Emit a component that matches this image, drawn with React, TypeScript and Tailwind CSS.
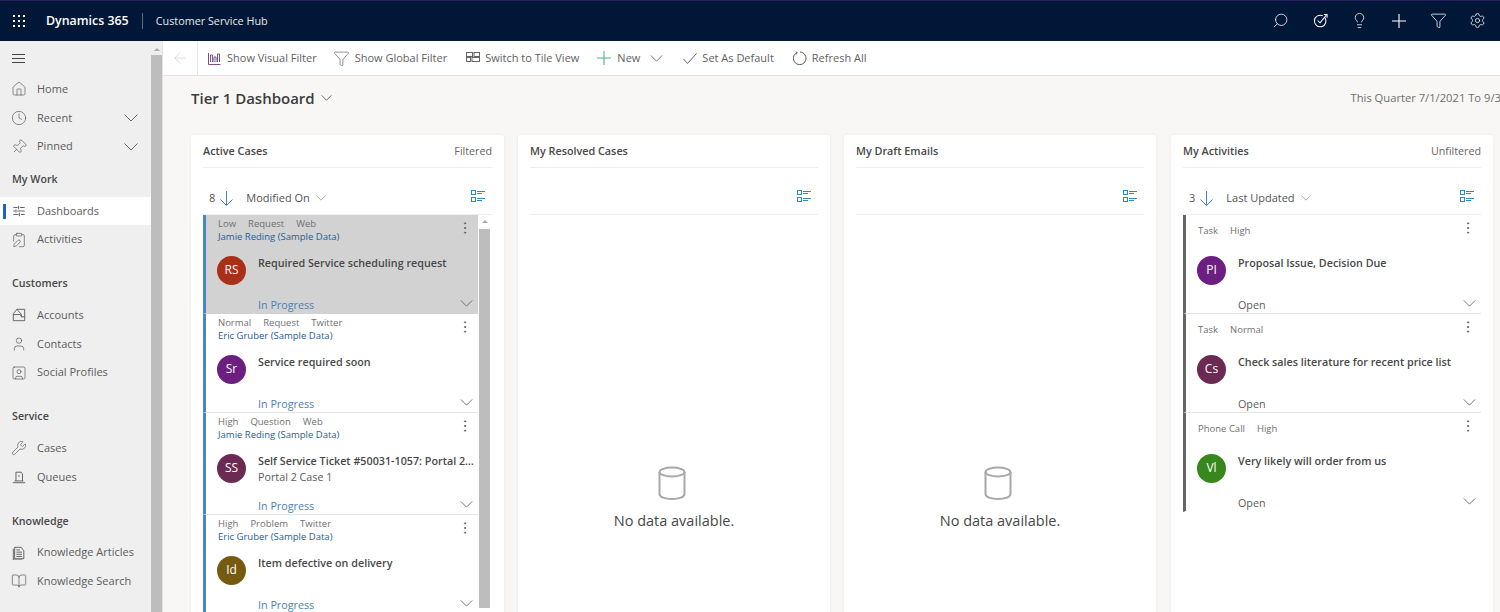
import { ReactNode } from "react";
import { ArrowLeft, BookOpen, Clock, EllipsisVertical, Funnel, Home, Lightbulb, Pin, Search, Settings, SquareUser, User, Wrench, ClipboardPen } from "lucide-react";

function Glyph({ children, className = "" }: { children: ReactNode; className?: string }) {
  return (
    <svg viewBox="0 0 16 16" fill="none" stroke="currentColor" strokeWidth="1" className={className}>
      {children}
    </svg>
  );
}

// thin chevron, the width is the full drawn width
function Chev({ className = "" }: { className?: string }) {
  return (
    <svg viewBox="0 0 14 8" fill="none" stroke="currentColor" strokeWidth="1" className={className}>
      <path d="M.5.5 7 7 13.500.5" />
    </svg>
  );
}

function PlusMark({ className = "" }: { className?: string }) {
  return (
    <svg viewBox="0 0 14 14" fill="none" stroke="currentColor" strokeWidth="1.100" className={className}>
      <path d="M7 0v14M0 7h14" />
    </svg>
  );
}

function Waffle() {
  const dots = [2, 7, 12];
  return (
    <svg viewBox="0 0 14 14" className="w-[14px] h-[14px]" fill="#fff">
      {dots.map((y) => dots.map((x) => <rect key={`${x}-${y}`} x={x - 1} y={y - 1} width="2" height="2" />))}
    </svg>
  );
}

function ListIcon({ className = "" }: { className?: string }) {
  return (
    <svg viewBox="0 0 14 12" fill="none" stroke="#2b88c8" strokeWidth="1" className={`w-[14px] h-[12px] ${className}`}>
      <rect x="0.5" y="0.5" width="4" height="4" />
      <rect x="0.5" y="7.5" width="4" height="4" />
      <path d="M6 1.500h8M6 3.500h5M6 8.500h8M6 10.500h5" />
    </svg>
  );
}

const iconCls = "w-[16px] h-[16px] text-[#555]";
const glyphCls = "w-[14px] h-[14px] ml-px text-[#555]";

function NavItem({ icon, label, chevron, active }: { icon: ReactNode; label: string; chevron?: boolean; active?: boolean }) {
  return (
    <div className={`relative flex items-center h-[28.7px] pl-[11px] pr-[13px] ${active ? "bg-white" : ""}`}>
      {active && <div className="absolute left-[3px] top-[7px] w-[3px] h-[15px] bg-[#1c62d0]" />}
      <div className="w-[26px] shrink-0">{icon}</div>
      <span className="text-[11px] text-[#5c5c5c] whitespace-nowrap">{label}</span>
      {chevron && <Chev className="ml-auto w-[14px] h-[8px] text-[#666]" />}
    </div>
  );
}

function NavGroup({ title, first, children }: { title: string; first?: boolean; children: ReactNode }) {
  return (
    <div className={first ? "" : "mt-[11.5px]"}>
      <div className="flex items-center h-[35.5px] pl-[12px] text-[10.7px] font-semibold text-[#484848]">{title}</div>
      {children}
    </div>
  );
}

function Sidebar() {
  return (
    <aside className="flex w-[163px] shrink-0 bg-[#efefef] border-r border-[#e4e4e4]">
      <div className="w-[151px] shrink-0">
        <div className="flex items-center h-[34px] pl-[12px]">
          <svg viewBox="0 0 13 9" fill="none" stroke="#444" strokeWidth="1" className="w-[13px] h-[9px]">
            <path d="M0 .5h13M0 4.500h13M0 8.500h13" />
          </svg>
        </div>
        <NavItem icon={<Home className={iconCls} strokeWidth={1} />} label="Home" />
        <NavItem icon={<Clock className={iconCls} strokeWidth={1} />} label="Recent" chevron />
        <NavItem icon={<Pin className={`${iconCls} rotate-45`} strokeWidth={1} />} label="Pinned" chevron />
        <NavGroup title="My Work" first>
          <NavItem
            active
            label="Dashboards"
            icon={
              <Glyph className={glyphCls}>
                <path d="M1.500 4h5M9 4h5.500M1.500 8h2M6 8h8.500M1.500 12h6M10 12h4.500M7.500 2v4M4.500 6v4M8.500 10v4" />
              </Glyph>
            }
          />
          <NavItem icon={<ClipboardPen className={iconCls} strokeWidth={1} />} label="Activities" />
        </NavGroup>
        <NavGroup title="Customers">
          <NavItem
            label="Accounts"
            icon={
              <Glyph className={glyphCls}>
                <path d="M1.500 14.500v-8l4-5h9v13zM1.500 7.500h8l2 3M5.500 1.500l5 5.500v3h4" />
              </Glyph>
            }
          />
          <NavItem icon={<User className={iconCls} strokeWidth={1} />} label="Contacts" />
          <NavItem icon={<SquareUser className={iconCls} strokeWidth={1} />} label="Social Profiles" />
        </NavGroup>
        <NavGroup title="Service">
          <NavItem icon={<Wrench className={iconCls} strokeWidth={1} />} label="Cases" />
          <NavItem
            label="Queues"
            icon={
              <Glyph className={glyphCls}>
                <path d="M1 14.500h14M3 12.500h10M4.500 12.500v-10h6l1.500 2v8M8 6v2" />
              </Glyph>
            }
          />
        </NavGroup>
        <NavGroup title="Knowledge">
          <NavItem
            label="Knowledge Articles"
            icon={
              <Glyph className={glyphCls}>
                <path d="M3 14.500h10.500v-9l-3-4H3zM1.500 3v13h10M5 4.500h4M5 7h6.500M5 9.500h6.500M5 12h6.500" />
              </Glyph>
            }
          />
          <NavItem icon={<BookOpen className={iconCls} strokeWidth={1} />} label="Knowledge Search" />
        </NavGroup>
      </div>
      <div className="flex flex-col w-[11px] shrink-0 pt-[5px]">
        <div className="flex justify-center h-[9px] pt-[2px]">
          <div className="w-0 h-0 border-x-[3px] border-x-transparent border-b-[3px] border-b-[#aaa]" />
        </div>
        <div className="flex-1 bg-[#bdbdbd]" />
      </div>
    </aside>
  );
}

function ToolItem({ icon, label, className = "" }: { icon: ReactNode; label: string; className?: string }) {
  return (
    <div className={`flex items-center gap-[5px] whitespace-nowrap ${className}`}>
      {icon}
      <span className="text-[11px] text-[#5f5f5f]">{label}</span>
    </div>
  );
}

function Toolbar() {
  return (
    <div className="flex items-center h-[35px] bg-white border-b border-[#e3e3e3]">
      <div className="flex items-center justify-center w-[35px] h-[34px] border-r border-[#e8e8e8]">
        <ArrowLeft className="w-[18px] h-[18px] text-[#d0d0d0]" strokeWidth={1} />
      </div>
      <ToolItem
        className="ml-[10px]"
        label="Show Visual Filter"
        icon={
          <svg viewBox="0 0 13 13" fill="none" stroke="#7a4f8c" strokeWidth="1" className="w-[13px] h-[13px] mr-px">
            <path d="M.5 1v11.500h12M2.500 10V3h2v7M6 10V5h2v5M9.500 10V2h2v8" />
          </svg>
        }
      />
      <ToolItem
        className="ml-[16px]"
        label="Show Global Filter"
        icon={<Funnel className="w-[17px] h-[17px] text-[#666]" strokeWidth={1} />}
      />
      <ToolItem
        className="ml-[19px]"
        label="Switch to Tile View"
        icon={
          <svg viewBox="0 0 14 10" fill="none" stroke="#666" strokeWidth="1" className="w-[14px] h-[10px] -mt-[2px]">
            <rect x=".5" y=".5" width="6" height="4" />
            <rect x="8" y=".5" width="5.500" height="4" />
            <rect x=".5" y="5.500" width="4" height="4" />
            <rect x="6" y="5.500" width="7.500" height="4" />
          </svg>
        }
      />
      <ToolItem className="ml-[18px]" label="New" icon={<PlusMark className="w-[14px] h-[14px] mr-px text-[#55b08a]" />} />
      <Chev className="ml-[10px] w-[13px] h-[7px] text-[#666]" />
      <ToolItem
        className="ml-[20px]"
        label="Set As Default"
        icon={
          <svg viewBox="0 0 14 11" fill="none" stroke="#666" strokeWidth="1" className="w-[14px] h-[11px]">
            <path d="M.5 6l4 4.500L13.500.5" />
          </svg>
        }
      />
      <ToolItem
        className="ml-[19px]"
        label="Refresh All"
        icon={
          <svg viewBox="0 0 14 14" fill="none" stroke="#555" strokeWidth="1" className="w-[14px] h-[14px] -mt-[1px]">
            <path d="M4 1.600A6.300 6.300 0 1 0 7 1M3 .5l1.200 1.300L3 3.500" />
          </svg>
        }
      />
    </div>
  );
}

type RowData = {
  meta: string[];
  owner?: string;
  initials: string;
  color: string;
  title: string;
  sub?: string;
  status: string;
  selected?: boolean;
  tall?: boolean;
  last?: boolean;
};

const caseRows: RowData[] = [
  { meta: ["Low", "Request", "Web"], owner: "Jamie Reding (Sample Data)", initials: "RS", color: "bg-[#a92f17]", title: "Required Service scheduling request", status: "In Progress", selected: true },
  { meta: ["Normal", "Request", "Twitter"], owner: "Eric Gruber (Sample Data)", initials: "Sr", color: "bg-[#6c1f80]", title: "Service required soon", status: "In Progress" },
  { meta: ["High", "Question", "Web"], owner: "Jamie Reding (Sample Data)", initials: "SS", color: "bg-[#6b2a52]", title: "Self Service Ticket #50031-1057: Portal 2 Case 1", sub: "Portal 2 Case 1", status: "In Progress", tall: true },
  { meta: ["High", "Problem", "Twitter"], owner: "Eric Gruber (Sample Data)", initials: "Id", color: "bg-[#765a10]", title: "Item defective on delivery", status: "In Progress" },
];

const activityRows: RowData[] = [
  { meta: ["Task", "High"], initials: "PI", color: "bg-[#6c1f80]", title: "Proposal Issue, Decision Due", status: "Open" },
  { meta: ["Task", "Normal"], initials: "Cs", color: "bg-[#6b2a52]", title: "Check sales literature for recent price list", status: "Open" },
  { meta: ["Phone Call", "High"], initials: "Vl", color: "bg-[#37871c]", title: "Very likely will order from us", status: "Open", last: true },
];

function Row({ row, accent, statusColor }: { row: RowData; accent: string; statusColor: string }) {
  const bottom = row.selected ? "bg-[#d2d2d2] border-b-[#d2d2d2]" : row.last ? "border-b-transparent" : "border-b-[#e4e4e4]";
  return (
    <div className={`relative flex flex-col border-l-[3px] border-b pl-[11px] pr-[5px] ${accent} ${row.tall ? "h-[102px]" : "h-[99px]"} ${bottom}`}>
      <div className="flex flex-col justify-center h-[30px] pl-px shrink-0">
        <div className="flex gap-[12px] text-[9.5px] leading-[13px] text-[#707070]">
          {row.meta.map((m) => (
            <span key={m}>{m}</span>
          ))}
        </div>
        {row.owner && <div className="text-[9.5px] leading-[13px] text-[#22609a] whitespace-nowrap">{row.owner}</div>}
      </div>
      <EllipsisVertical className="absolute top-[5px] right-[5px] w-[16px] h-[16px] text-[#555]" strokeWidth={1.25} />
      <div className="flex gap-[12px] mt-[10px]">
        <div className={`flex items-center justify-center w-[29px] h-[29px] mt-[0.5px] shrink-0 rounded-full text-[12px] text-white ${row.color}`}>
          {row.initials}
        </div>
        <div className="min-w-0 flex-1 -mr-[3px]">
          <div className="truncate text-[10.75px] leading-[16px] font-semibold text-[#484848]">{row.title}</div>
          {row.sub && <div className="text-[10.75px] leading-[16px] text-[#5c5c5c]">{row.sub}</div>}
        </div>
      </div>
      <div className="flex items-center justify-between mt-auto pl-[41px]">
        <span className={`text-[10.75px] leading-[16px] ${statusColor}`}>{row.status}</span>
        <Chev className="w-[13px] h-[7px] mb-[3px] text-[#666]" />
      </div>
    </div>
  );
}

function Card({ title, filter, width, children }: { title: string; filter?: string; width: string; children: ReactNode }) {
  return (
    <section className={`shrink-0 bg-white rounded-[3px] shadow-[0_0_3px_rgba(0,0,0,0.07)] px-[12px] ${width}`}>
      <div className="flex items-center justify-between h-[33px] border-b border-[#eeeeee]">
        <span className="text-[10.8px] font-semibold text-[#484848]">{title}</span>
        {filter && <span className="text-[10.7px] text-[#666]">{filter}</span>}
      </div>
      {children}
    </section>
  );
}

function SortBar({ count, label }: { count?: string; label?: string }) {
  return (
    <div className="flex items-center h-[47px] pl-[6px] pr-[7px] pt-[14px] border-b border-[#eeeeee]">
      {count && (
        <>
          <span className="text-[11px] text-[#555]">{count}</span>
          <svg viewBox="0 0 13 15" fill="none" stroke="#4a7fc0" strokeWidth="1" className="ml-[5px] w-[13px] h-[15px]">
            <path d="M6.500 0v14.500M.5 8.500l6 6 6-6" />
          </svg>
          <span className="ml-[13px] text-[11px] text-[#555]">{label}</span>
          <Chev className="ml-[6px] w-[10px] h-[6px] text-[#888]" />
        </>
      )}
      <ListIcon className="ml-auto -mt-[4px]" />
    </div>
  );
}

function Empty() {
  return (
    <div className="flex flex-col items-center pt-[251px]">
      <svg viewBox="0 0 28 35" fill="none" stroke="#a8a8a8" strokeWidth="2" className="w-[28px] h-[35px] -ml-[4px]">
        <ellipse cx="14" cy="6" rx="12.500" ry="4.500" />
        <path d="M1.500 6v22c0 3 5.500 5 12.500 5s12.500-2 12.500-5V6" />
      </svg>
      <div className="mt-[9px] text-[14.5px] text-[#484848]">No data available.</div>
    </div>
  );
}

export default function App() {
  return (
    <div className="flex flex-col w-[1500px] h-[612px] overflow-hidden bg-[#f8f7f6] font-['Open_Sans',sans-serif]">
      <header className="flex items-center h-[41px] shrink-0 bg-[#001738] border-t border-[#2c1f5e] text-white">
        <div className="ml-[12px]">
          <Waffle />
        </div>
        <span className="ml-[20px] text-[12.4px] font-semibold">Dynamics 365</span>
        <div className="ml-[13px] w-px h-[16px] bg-[#5a6a80]" />
        <span className="ml-[13px] text-[10.8px] text-[#e8e8e8]">Customer Service Hub</span>
        <div className="ml-auto flex items-center pr-[3px] -mt-[1px]">
          <div className="flex justify-center w-[39.3px]">
            <Search className="w-[17px] h-[17px] -scale-x-100" strokeWidth={1.1} />
          </div>
          <div className="flex justify-center w-[39.3px]">
            <svg viewBox="0 0 16 16" fill="none" stroke="#fff" strokeWidth="1.100" className="w-[15px] h-[15px]">
              <path d="M12.800 5A6.200 6.200 0 1 1 10.500 3M5 8l2.500 2.500L14 2.500M11.500 1.500H15V5" />
            </svg>
          </div>
          <div className="flex justify-center w-[39.3px]">
            <Lightbulb className="w-[17px] h-[17px]" strokeWidth={1.1} />
          </div>
          <div className="flex justify-center w-[39.3px]">
            <PlusMark className="w-[14px] h-[14px]" />
          </div>
          <div className="flex justify-center w-[39.3px]">
            <Funnel className="w-[17px] h-[17px]" strokeWidth={1.1} />
          </div>
          <div className="flex justify-center w-[39.3px]">
            <Settings className="w-[17px] h-[17px]" strokeWidth={1.1} />
          </div>
        </div>
      </header>
      <div className="flex flex-1 min-h-0">
        <Sidebar />
        <main className="flex-1 min-w-0 overflow-hidden">
          <Toolbar />
          <div className="flex items-center justify-between w-[1374px] h-[44px] pl-[28px]">
            <div className="flex items-center gap-[6px]">
              <h1 className="text-[15px] font-semibold text-[#3c3c3c]">Tier 1 Dashboard</h1>
              <Chev className="w-[11px] h-[6px] text-[#444]" />
            </div>
            <span className="text-[11.2px] text-[#6e6e6e] whitespace-nowrap">This Quarter 7/1/2021 To 9/30/2021</span>
          </div>
          <div className="flex gap-[14px] h-[600px] mt-[15px] pl-[28px]">
            <Card title="Active Cases" filter="Filtered" width="w-[313px]">
              <SortBar count="8" label="Modified On" />
              <div className="flex">
                <div className="w-[275px] shrink-0">
                  {caseRows.map((r) => (
                    <Row key={r.title} row={r} accent="border-l-[#4a86c0]" statusColor="text-[#4d81b4]" />
                  ))}
                </div>
                <div className="flex flex-col w-[11px] ml-[1px] h-[393px]">
                  <div className="flex justify-center h-[14px] pt-[5px]">
                    <div className="w-0 h-0 border-x-[3px] border-x-transparent border-b-[3px] border-b-[#aaa]" />
                  </div>
                  <div className="flex-1 bg-[#bdbdbd]" />
                </div>
              </div>
            </Card>
            <Card title="My Resolved Cases" width="w-[312px]">
              <SortBar />
              <Empty />
            </Card>
            <Card title="My Draft Emails" width="w-[312px]">
              <SortBar />
              <Empty />
            </Card>
            <Card title="My Activities" filter="Unfiltered" width="w-[322px] ml-px">
              <SortBar count="3" label="Last Updated" />
              {activityRows.map((r) => (
                <Row key={r.title} row={r} accent="border-l-[#666666]" statusColor="text-[#5c5c5c]" />
              ))}
            </Card>
          </div>
        </main>
      </div>
    </div>
  );
}
